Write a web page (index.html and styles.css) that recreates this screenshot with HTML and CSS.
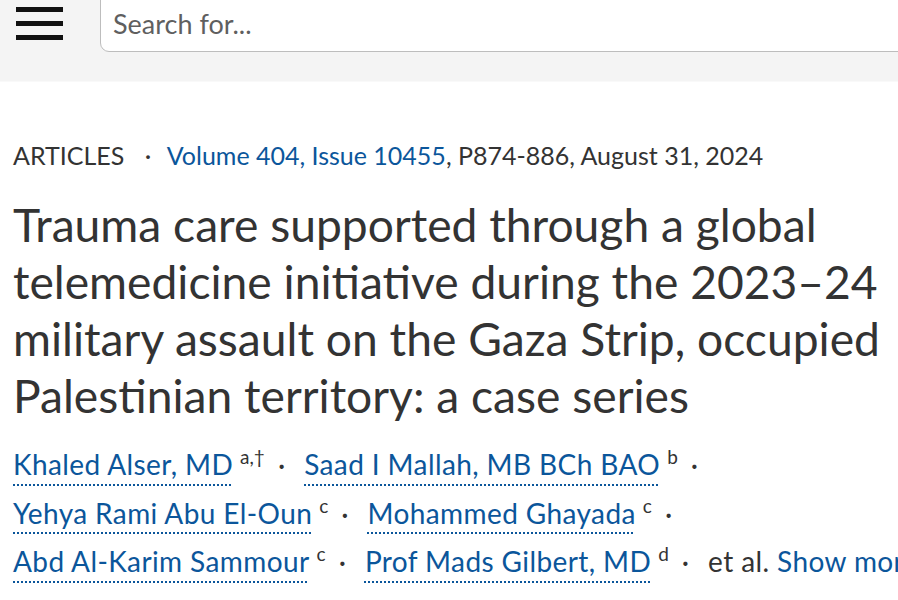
FILE: index.html
```html
<!DOCTYPE html>
<html lang="en">
<head>
<meta charset="utf-8">
<title>Trauma care supported through a global telemedicine initiative</title>
<link rel="stylesheet" href="styles.css">
</head>
<body>
<header class="topbar">
  <button class="menu-btn" aria-label="Menu">
    <span class="bar"></span><span class="bar"></span><span class="bar"></span>
  </button>
  <div class="search">
    <span class="search-placeholder">Search for...</span>
  </div>
</header>
<main class="article">
  <div class="meta">
    <span class="meta-type">ARTICLES</span>
    <span class="sep">·</span>
    <a class="meta-link" href="#">Volume 404, Issue 10455</a><span>, P874-886, August 31, 2024</span>
  </div>
  <h1 class="title">Trauma care supported through a global telemedicine initiative during the 2023–24 military assault on the Gaza Strip, occupied Palestinian territory: a case series</h1>
  <div class="authors">
    <span class="author"><a href="#" class="author-name">Khaled Alser, MD</a><sup>a,†</sup><span class="dot">·</span></span>
    <span class="author"><a href="#" class="author-name">Saad I Mallah, MB BCh BAO</a><sup>b</sup><span class="dot">·</span></span>
    <span class="author"><a href="#" class="author-name">Yehya Rami Abu El-Oun</a><sup>c</sup><span class="dot">·</span></span>
    <span class="author"><a href="#" class="author-name">Mohammed Ghayada</a><sup>c</sup><span class="dot">·</span></span>
    <span class="author"><a href="#" class="author-name">Abd Al-Karim Sammour</a><sup>c</sup><span class="dot">·</span></span>
    <span class="author"><a href="#" class="author-name">Prof Mads Gilbert, MD</a><sup>d</sup><span class="dot">·</span></span>
    <span class="author etal">et al. <a href="#" class="show-more">Show more</a></span>
  </div>
</main>
</body>
</html>
```
FILE: styles.css
```css
html, body {
  margin: 0;
  padding: 0;
  overflow: hidden;
  background: #ffffff;
}
body {
  font-family: "Lato", "Liberation Sans", sans-serif;
  color: #333333;
  width: 980px;
}
.topbar {
  height: 82px;
  background: #f4f4f4;
  border-bottom: 1px solid #f9f9f9;
  display: flex;
  align-items: flex-start;
  box-sizing: border-box;
}
.menu-btn {
  margin: 7px 0 0 16px;
  padding: 0;
  width: 47px;
  border: 0;
  background: none;
  display: flex;
  flex-direction: column;
  gap: 9.5px;
}
.bar {
  display: block;
  height: 4.5px;
  background: #111111;
}
.search {
  margin: -10px 0 0 37px;
  height: 62px;
  flex: 1;
  background: #ffffff;
  border: 1.5px solid #bdbdbd;
  border-radius: 9px;
  box-sizing: border-box;
  display: flex;
  align-items: flex-end;
  padding: 0 0 10px 12px;
}
.search-placeholder {
  font-size: 27px;
  line-height: 34px;
  color: #5f5f5f;
}
.article {
  padding: 58px 0 0 13px;
}
.meta {
  font-size: 25px;
  line-height: 30px;
  color: #333333;
}
.sep {
  margin: 0 10px 0 14px;
}
.meta-link {
  color: #0b569b;
  text-decoration: none;
}
.title {
  margin: 26px 0 0 0;
  font-size: 46.2px;
  line-height: 57px;
  font-weight: 400;
  color: #333333;
  width: 940px;
}
.authors {
  margin-top: 16px;
  font-size: 28px;
  line-height: 48.5px;
  letter-spacing: 0.4px;
  width: 940px;
}
.author {
  white-space: nowrap;
}
.author-name {
  color: #0b569b;
  text-decoration: underline dotted #0b569b;
  text-decoration-thickness: 2px;
  text-underline-offset: 9px;
}
.author sup {
  font-size: 19px;
  line-height: 0;
  letter-spacing: 0;
  margin-left: 7px;
  vertical-align: 11px;
}
.dot {
  margin: 0 11px 0 13px;
}
.show-more {
  color: #0b569b;
  text-decoration: none;
}
```
